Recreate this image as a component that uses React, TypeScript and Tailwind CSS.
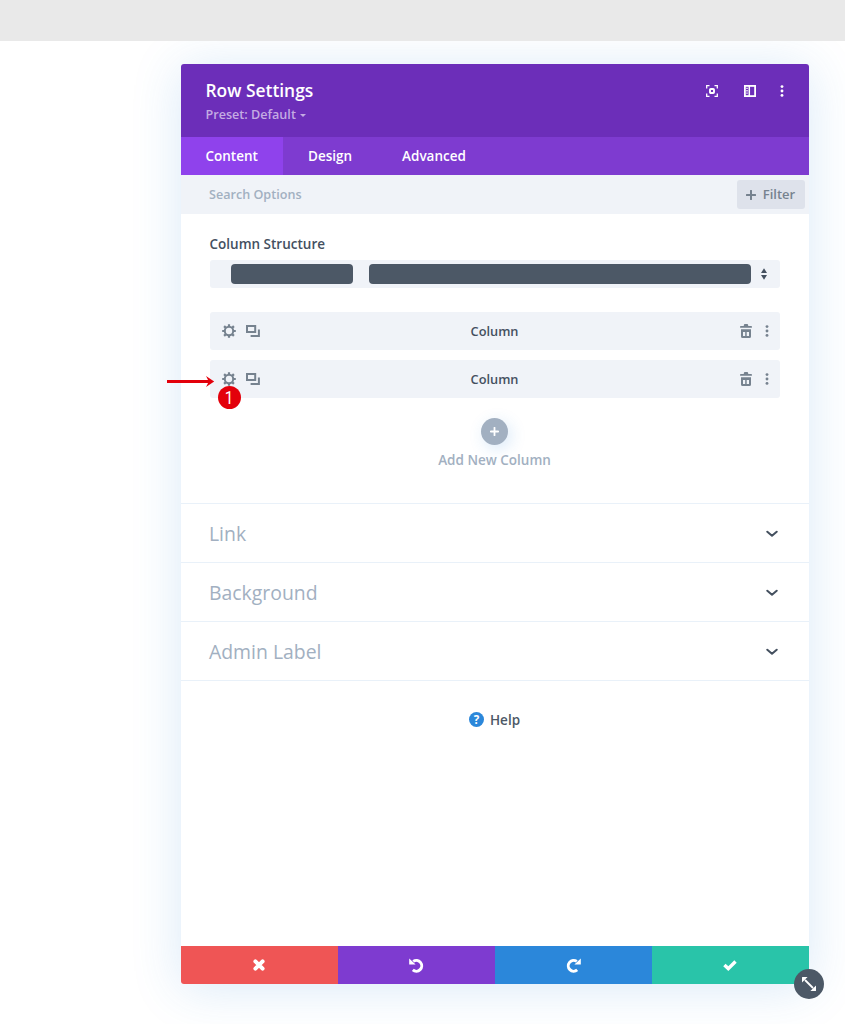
import React from "react";

type IconProps = { className?: string };

const Gear = ({ className }: IconProps) => (
  <svg className={className} viewBox="0 0 14 14" fill="none" stroke="currentColor">
    <circle cx="7" cy="7" r="4.200" strokeWidth="2" />
    <path
      d="M7 0.200v2.600M7 11.200v2.600M0.200 7h2.600M11.200 7h2.600M2.100 2.100l2 2M9.900 9.900l2 2M2.100 11.900l2-2M9.900 4.100l2-2"
      strokeWidth="2.200"
    />
  </svg>
);

const Duplicate = ({ className }: IconProps) => (
  <svg className={className} viewBox="0 0 14 12" fill="none" stroke="currentColor" strokeWidth="2">
    <rect x="1" y="1" width="8.200" height="6" />
    <path d="M12.900 4.400V11H4.600" />
  </svg>
);

const Trash = ({ className }: IconProps) => (
  <svg className={className} viewBox="0 0 12 14" fill="currentColor">
    <path d="M3.800 1.200Q3.800 0 5 0h2Q8.200 0 8.200 1.200V2H11.200q.8 0 .8.900t-.8.900H.8Q0 3.800 0 2.900T.8 2h3z" />
    <path
      fillRule="evenodd"
      d="M1 5.300h10v7.200q0 1.500-1.500 1.500h-7Q1 14 1 12.500zM3 8v4h2.200V8zM6.700 8v4H9V8z"
    />
  </svg>
);

const Dots = ({ className }: IconProps) => (
  <svg className={className} viewBox="0 0 4 12" fill="currentColor">
    <circle cx="2" cy="1.600" r="1.450" />
    <circle cx="2" cy="6" r="1.450" />
    <circle cx="2" cy="10.400" r="1.450" />
  </svg>
);

const Focus = ({ className }: IconProps) => (
  <svg className={className} viewBox="0 0 12 12" fill="none" stroke="currentColor">
    <path d="M.7 3.500V.7h2.800M8.500.7h2.800v2.800M11.300 8.500v2.800H8.500M3.500 11.300H.7V8.500" strokeWidth="1.300" />
    <rect x="4" y="4" width="4" height="4" rx="0.800" strokeWidth="1.900" />
  </svg>
);

const Sidebar = ({ className }: IconProps) => (
  <svg className={className} viewBox="0 0 12 12" fill="none" stroke="currentColor">
    <rect x="0.900" y="0.900" width="10.200" height="10.200" strokeWidth="1.800" />
    <path d="M5.300 1v10" strokeWidth="1.500" />
    <path d="M3 2.700v7" strokeWidth="1.400" strokeDasharray="1.300 1.100" />
  </svg>
);

const Plus = ({ className }: IconProps) => (
  <svg className={className} viewBox="0 0 10 10" fill="none" stroke="currentColor" strokeWidth="2">
    <path d="M5 .8v8.400M.8 5h8.400" strokeLinecap="round" />
  </svg>
);

const Chevron = ({ className }: IconProps) => (
  <svg className={className} viewBox="0 0 12 8" fill="none" stroke="currentColor" strokeWidth="2">
    <path d="M1.300 1.700 6 5.800l4.700-4.100" strokeLinecap="round" strokeLinejoin="round" />
  </svg>
);

const Cross = ({ className }: IconProps) => (
  <svg className={className} viewBox="0 0 12 12" fill="none" stroke="currentColor" strokeWidth="4">
    <path d="M2.400 2.400l7.200 7.200M9.600 2.400l-7.200 7.200" strokeLinecap="round" />
  </svg>
);

const Undo = ({ className }: IconProps) => (
  <svg className={className} viewBox="0 0 15 15" fill="none">
    <path d="M4.200 3.400A5.400 5.400 0 1 1 3.800 11.900" stroke="currentColor" strokeWidth="2.900" />
    <path d="M.2.600v6h6.400z" fill="currentColor" />
  </svg>
);

const Check = ({ className }: IconProps) => (
  <svg className={className} viewBox="0 0 14 11" fill="none" stroke="currentColor" strokeWidth="3.400">
    <path d="M1.400 4.900l3.900 3.700 7.200-7.100" />
  </svg>
);

const Resize = ({ className }: IconProps) => (
  <svg className={className} viewBox="0 0 14 14" fill="currentColor">
    <path d="M3 3l8 8" stroke="currentColor" strokeWidth="1.800" />
    <path d="M.5 0H5.600L0 5.600V.5Q0 0 .5 0zM13.500 14H8.400L14 8.400v5.100q0 .5-.5.500z" />
  </svg>
);

const ColumnRow = ({ marked = false }: { marked?: boolean }) => (
  <div className="relative flex h-[38px] items-center rounded-[3px] bg-[#f0f3f8] pr-[11px] pl-[12px] text-[#76828f]">
    <Gear className="h-[14px] w-[14px]" />
    <Duplicate className="ml-[10px] h-[12px] w-[14px]" />
    <span className="flex-1 pr-[10px] text-center text-[12.800px] leading-[18px] font-semibold text-[#44505f]">
      Column
    </span>
    <Trash className="h-[14px] w-[12px]" />
    <Dots className="ml-[13px] h-[12px] w-[4px]" />
    {marked && (
      <>
        <svg className="absolute top-[15px] -left-[43px] h-[12px] w-[48px]" viewBox="0 0 48 12">
          <path d="M0 6.500h44" stroke="#e3000b" strokeWidth="3" />
          <path d="M39 .9 47.200 6.500 39 12 41.800 6.500z" fill="#e3000b" />
        </svg>
        <span className="absolute top-[26px] left-[8px] flex h-[23px] w-[23px] items-center justify-center rounded-full bg-[#e3000b] font-['Roboto',sans-serif] text-[18px] leading-none text-white">
          <span className="scale-x-[0.850]">1</span>
        </span>
      </>
    )}
  </div>
);

const Section = ({ title }: { title: string }) => (
  <div className="flex h-[59px] items-center justify-between border-t border-[#e9f1f9] pt-[2px] pr-[31px] pl-[28.500px]">
    <span className="text-[19.400px] leading-[28px] text-[#a2b0c1]">{title}</span>
    <Chevron className="h-[8px] w-[12px] text-[#44505f]" />
  </div>
);

export default function App() {
  return (
    <div className="h-[1024px] w-[845px] overflow-hidden bg-white font-['Open_Sans',sans-serif]">
      <div className="relative z-10 h-[41px] bg-[#e9e9e9]" />
      <div className="relative mt-[23px] ml-[180.500px] flex h-[920px] w-[628px] flex-col rounded-[3px] bg-white shadow-[0_4px_50px_rgba(43,135,218,0.180)]">
        <header className="flex h-[73px] justify-between rounded-t-[3px] bg-[#6c2eb9] pr-[24.500px] pl-[25px] text-white">
          <div className="pt-[14px]">
            <h1 className="text-[17.400px] leading-[24px] font-semibold">Row Settings</h1>
            <button className="mt-[2px] flex items-center gap-[4px] text-[12.600px] leading-[22px] font-semibold text-[#c4abe3]">
              Preset: Default
              <svg className="h-[3px] w-[6px]" viewBox="0 0 6 3" fill="currentColor">
                <path d="M0 0h6L3 3z" />
              </svg>
            </button>
          </div>
          <div className="flex pt-[21px]">
            <Focus className="h-[12px] w-[12px]" />
            <Sidebar className="ml-[26px] h-[12px] w-[12px]" />
            <Dots className="ml-[24px] h-[12px] w-[4px]" />
          </div>
        </header>
        <nav className="flex h-[38px] bg-[#7e3bd0] text-[13.500px] font-semibold text-white">
          <button className="w-[102.500px] bg-[#8f42ec] pl-[25px] text-left">Content</button>
          <button className="ml-[25px] text-left">Design</button>
          <button className="ml-[50px] text-left">Advanced</button>
        </nav>
        <div className="flex h-[39px] items-center justify-between bg-[#f0f3f8] pr-[4px] pl-[28.500px]">
          <span className="pt-[2px] text-[12.600px] font-semibold text-[#a2b0c1]">Search Options</span>
          <button className="flex h-[29px] w-[68px] items-center justify-center gap-[7px] rounded-[3px] bg-[#dee2eb] text-[13px] font-semibold text-[#76828f]">
            <Plus className="h-[10px] w-[10px]" />
            Filter
          </button>
        </div>
        <main className="flex flex-1 flex-col">
          <div className="h-[289px] pt-[20px] pr-[29px] pl-[29px]">
            <h2 className="text-[13.500px] leading-[20px] font-semibold text-[#44505f]">Column Structure</h2>
            <div className="mt-[6px] flex h-[28px] items-center rounded-[3px] bg-[#f0f3f8] pl-[21px]">
              <div className="h-[19.500px] w-[122.500px] rounded-[4px] bg-[#4c5866]" />
              <div className="ml-[15.500px] h-[19.500px] w-[382.500px] rounded-[4px] bg-[#4c5866]" />
              <svg className="ml-[10px] h-[12px] w-[6px]" viewBox="0 0 6 12" fill="#44505f">
                <path d="M3 .3 6 5H0zM3 11.700 6 7H0z" />
              </svg>
            </div>
            <div className="mt-[24px] flex flex-col gap-[10px]">
              <ColumnRow />
              <ColumnRow marked />
            </div>
            <div className="mt-[20px] flex flex-col items-center">
              <button className="flex h-[27px] w-[27px] items-center justify-center rounded-full bg-[#a2b0c1] text-white shadow-[3px_4px_16px_rgba(43,135,218,0.180)]">
                <Plus className="h-[9px] w-[9px]" />
              </button>
              <span className="mt-[5px] text-[13.500px] leading-[20px] font-semibold text-[#a2b0c1]">Add New Column</span>
            </div>
          </div>
          <Section title="Link" />
          <Section title="Background" />
          <Section title="Admin Label" />
          <div className="flex justify-center border-t border-[#e9f1f9] pt-[28.500px]">
            <div className="flex items-center gap-[6px] text-[13.500px] leading-[20px] font-semibold text-[#4c5866]">
              <span className="flex h-[15px] w-[15px] items-center justify-center rounded-full bg-[#2b87da] text-[11.500px] leading-none font-bold text-white">
                ?
              </span>
              Help
            </div>
          </div>
        </main>
        <footer className="grid h-[38px] grid-cols-4 overflow-hidden rounded-b-[3px] text-white">
          <button className="flex items-center justify-center bg-[#ef5555]">
            <Cross className="h-[12px] w-[12px]" />
          </button>
          <button className="flex items-center justify-center bg-[#7e3bd0]">
            <Undo className="h-[15px] w-[15px]" />
          </button>
          <button className="flex items-center justify-center bg-[#2b87da]">
            <Undo className="h-[15px] w-[15px] -scale-x-100" />
          </button>
          <button className="flex items-center justify-center bg-[#29c4a9]">
            <Check className="h-[11px] w-[14px]" />
          </button>
        </footer>
        <button className="absolute -right-[15.500px] -bottom-[15px] flex h-[30px] w-[30px] items-center justify-center rounded-full bg-[#4c5866] text-white">
          <Resize className="h-[14px] w-[14px]" />
        </button>
      </div>
    </div>
  );
}
